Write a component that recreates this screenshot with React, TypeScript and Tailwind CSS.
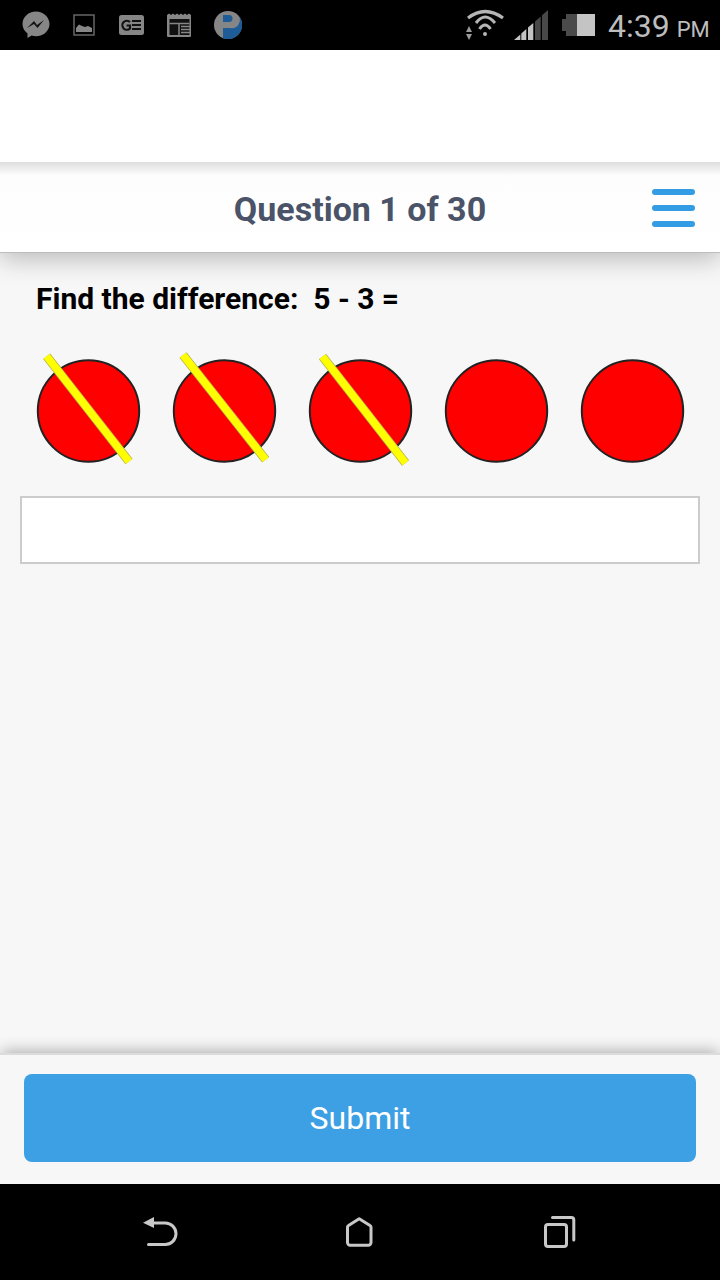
const circles = [
  { slash: [46.7, 356.3, 129, 461.5] },
  { slash: [183, 355, 265.700, 459.800] },
  { slash: [322.500, 356.500, 405.500, 463] },
  {},
  {},
];

function Ball({ i, slash }: { i: number; slash?: number[] }) {
  const left = 20 + i * 136;
  return (
    <div className="w-[136px] h-[128px] flex items-center justify-center">
      <svg width="136" height="128" viewBox="0 0 136 128">
        <circle cx="68.5" cy="64" r="50.700" fill="#ff0000" stroke="#222" strokeWidth="2" />
        {slash && (
          <line
            x1={slash[0] - left}
            y1={slash[1] - 347}
            x2={slash[2] - left}
            y2={slash[3] - 347}
            stroke="#b5b54a"
            strokeWidth="9"
          />
        )}
        {slash && (
          <line
            x1={slash[0] - left}
            y1={slash[1] - 347}
            x2={slash[2] - left}
            y2={slash[3] - 347}
            stroke="#ffff00"
            strokeWidth="7.500"
          />
        )}
      </svg>
    </div>
  );
}

function StatusLeft() {
  return (
    <div className="flex items-center">
      <svg width="28" height="28" viewBox="0 0 28 28" className="ml-[22px]">
        <path d="M14 .5C6.500 .5 .5 6 .5 13c0 4 2 7.200 5 9.500V27l4.200-2.400c1.400.4 2.800.6 4.300.6 7.500 0 13.500-5.400 13.500-12.200S21.500 .5 14 .5z" fill="#868686" />
        <path d="M5 17l7-7 3 4 7-5-6.500 8-3.500-4z" fill="#111" />
      </svg>
      <svg width="22" height="22" viewBox="0 0 22 22" className="ml-[23px]">
        <rect x="1" y="1" width="20" height="20" fill="none" stroke="#666" strokeWidth="1.500" />
        <path d="M3 18v-4l3-3.500 3 1.500 3 1 3-1 4 2v4z" fill="#868686" />
      </svg>
      <svg width="26" height="22" viewBox="0 0 26 22" className="ml-[24px]">
        <rect x="0" y="1" width="25" height="20" rx="2.500" fill="#868686" />
        <path d="M11 8A4.500 4.500 0 1 0 11 14.500V11.500H7.500" fill="none" stroke="#111" strokeWidth="2.200" />
        <path d="M13 7H22M13 11H22M13 15H22" stroke="#111" strokeWidth="2" />
      </svg>
      <svg width="26" height="24" viewBox="0 0 26 24" className="ml-[22px]">
        <path d="M0 2l2-1.500 2 1.500 2-1.500 2 1.500 2-1.500 2 1.500 2-1.500 2 1.500 2-1.500 2 1.500 2-1.500 2 1.500V23a1 1 0 0 1-1 1H1a1 1 0 0 1-1-1z" fill="#868686" />
        <path d="M2.500 6h20v16h-20z" fill="#111" />
        <path d="M2.500 10.500h20M12 10.500V22" stroke="#868686" strokeWidth="1.500" />
        <path d="M14 13.500h9M14 16.500h9M14 19.500h9" stroke="#868686" strokeWidth="1.500" />
      </svg>
      <svg width="28" height="28" viewBox="0 0 28 28" className="ml-[21px]">
        <circle cx="14" cy="14" r="14" fill="#868686" />
        <path d="M9 27.200V17H16A8 8 0 0 0 24 4.200A14 14 0 0 1 9 27.200z" fill="#1d5c96" />
        <path d="M9 4H15a3.500 3.500 0 0 1 3.500 3.500A3.500 3.500 0 0 1 15 11H9z" fill="#1d5c96" />
      </svg>
    </div>
  );
}

function StatusRight() {
  return (
    <div className="flex items-center">
      <svg width="38" height="34" viewBox="0 0 38 34">
        <path d="M2 10Q19 -3 37 10" fill="none" stroke="#b5b5b5" strokeWidth="3.200" />
        <path d="M10 15Q19 3 29 15" fill="none" stroke="#b5b5b5" strokeWidth="3" />
        <path d="M13.500 21Q19 13 24.500 21" fill="none" stroke="#b5b5b5" strokeWidth="3" />
        <circle cx="19" cy="26" r="2" fill="#b5b5b5" />
        <path d="M0 24l3-6 3 6zM0 26l3 6 3-6z" fill="#9a9a9a" />
      </svg>
      <svg width="34" height="30" viewBox="0 0 34 30" className="ml-[10px]">
        <path d="M0 30L6.300 24.400V30z" fill="#c4c4c4" />
        <path d="M7.300 23.600L12.300 19.100V30H7.300z" fill="#c4c4c4" />
        <path d="M14 17.600L19.300 13V30H14z" fill="#c4c4c4" />
        <path d="M21 11.500L26.700 6.500V30H21z" fill="#484848" />
        <path d="M28 5.300L34 0V30H28z" fill="#484848" />
      </svg>
      <div className="ml-[14px] flex items-center h-[22px]">
        <div className="w-[4px] h-[12px] bg-[#4a4a4a]" />
        <div className="w-[11px] h-[22px] bg-[#4a4a4a]" />
        <div className="w-[18px] h-[22px] bg-[#c4c4c4]" />
      </div>
      <div className="ml-[13px] mt-[1px] w-[112px] text-[#bdbdbd] whitespace-nowrap font-['Roboto',sans-serif] leading-none">
        <span className="text-[32px]">4:39</span>
        <span className="text-[22px] ml-[7px]">PM</span>
      </div>
    </div>
  );
}

export default function App() {
  return (
    <div className="w-[720px] h-[1280px] flex flex-col bg-[#f7f7f7] overflow-hidden font-['Roboto',sans-serif]">
      <div className="relative z-20 h-[50px] bg-black flex items-center justify-between shrink-0">
        <StatusLeft />
        <StatusRight />
      </div>
      <div className="relative z-20 h-[112px] bg-white shrink-0" />
      <div className="relative z-10 h-[91px] pt-[4px] shrink-0 bg-gradient-to-b from-[#dedede] via-[#fdfdfd] via-[15%] to-[#ffffff] flex items-center justify-center shadow-[0_6px_24px_rgba(0,0,0,0.25)] border-b border-[#bdbdbd]">
        <h1 className="text-[34px] font-bold text-[#4a5368] leading-none">Question 1 of 30</h1>
        <div className="absolute left-[652px] top-[27px] w-[43px] flex flex-col gap-[10px]">
          <div className="h-[6px] rounded-full bg-[#339ce3]" />
          <div className="h-[6px] rounded-full bg-[#339ce3]" />
          <div className="h-[6px] rounded-full bg-[#339ce3]" />
        </div>
      </div>
      <div className="flex-1 flex flex-col px-[20px]">
        <p className="pl-[16px] pt-[28px] text-[30px] leading-[36px] font-bold text-black whitespace-pre">Find the difference:  5 - 3 =</p>
        <div className="flex mt-[30px]">
          {circles.map((c, i) => (
            <Ball key={i} i={i} slash={c.slash} />
          ))}
        </div>
        <div className="mt-[21px] h-[68px] border-2 border-[#cccccc] bg-white" />
      </div>
      <div className="relative h-[131px] shrink-0 bg-[#f7f7f7] border-t-2 border-[#dcdcdc] shadow-[0_-4px_14px_-2px_rgba(0,0,0,0.3)] px-[24px] pt-[19px]">
        <button className="w-full h-[88px] rounded-[8px] bg-[#3d9fe4] text-white text-[32px] leading-none">Submit</button>
      </div>
      <div className="relative z-10 h-[96px] shrink-0 bg-black flex items-center pl-[141px]">
        <svg width="38" height="34" viewBox="0 0 38 34">
          <path d="M2 7.700L13 2V13z" fill="#c8c8c8" />
          <path d="M12 8H24.250A10.750 10.750 0 0 1 24.250 29.500H7.500" fill="none" stroke="#c8c8c8" strokeWidth="3" strokeLinecap="round" />
        </svg>
        <svg width="30" height="34" viewBox="0 0 30 34" className="ml-[166px]">
          <path d="M14.200 3.800L25 10.500a2 2 0 0 1 1 1.700V27.500a2.700 2.700 0 0 1-2.700 2.700H5.200a2.700 2.700 0 0 1-2.700-2.700V12.200a2 2 0 0 1 1-1.700z" fill="none" stroke="#c8c8c8" strokeWidth="3" strokeLinejoin="round" />
        </svg>
        <svg width="34" height="34" viewBox="0 0 34 34" className="ml-[168px]">
          <rect x="2.500" y="9.500" width="21" height="22" rx="2.500" fill="none" stroke="#c8c8c8" strokeWidth="3" />
          <path d="M9.500 2.500H28.300a2.500 2.500 0 0 1 2.500 2.500V25" fill="none" stroke="#c8c8c8" strokeWidth="3" strokeLinecap="round" />
        </svg>
      </div>
    </div>
  );
}
